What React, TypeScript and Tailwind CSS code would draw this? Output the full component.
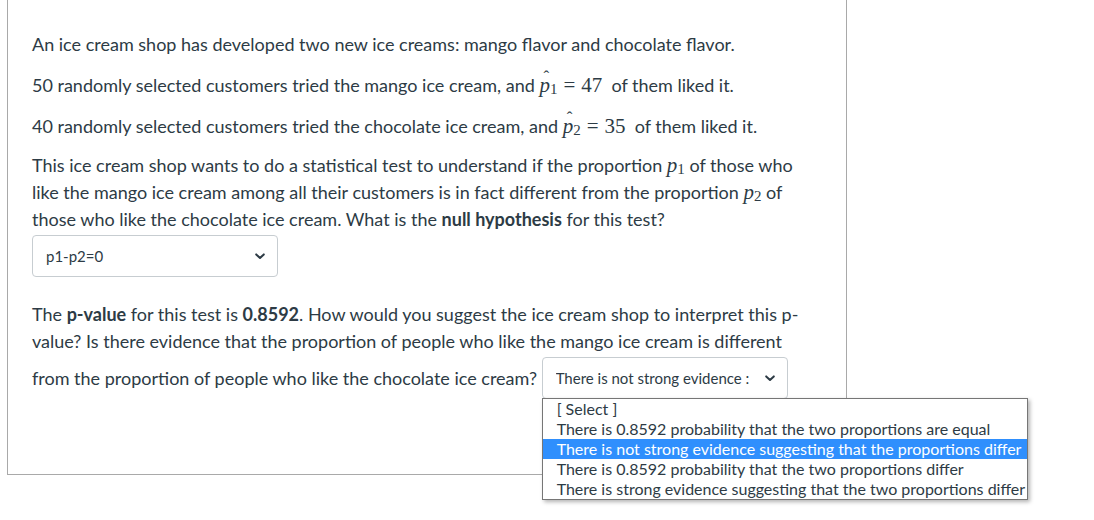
import React from 'react';

const Hat = ({ sub }: { sub: string }) => (
  <span className="font-['Liberation_Serif',serif] text-[21px] whitespace-nowrap">
    <span className="relative italic">
      p
      <span className="absolute left-[4px] top-[-10px] not-italic text-[17px]">ˆ</span>
    </span>
    <sub className="text-[15px] relative bottom-[-2px] align-baseline">{sub}</sub>
  </span>
);

const P = ({ sub }: { sub: string }) => (
  <span className="font-['Liberation_Serif',serif] text-[21px] whitespace-nowrap">
    <span className="italic">p</span>
    <sub className="text-[15px] relative bottom-[-2px] align-baseline">{sub}</sub>
  </span>
);

const Eq = ({ n }: { n: string }) => (
  <span className="font-['Liberation_Serif',serif] text-[21px] whitespace-nowrap">
    <span className="mx-[6px]">=</span>
    {n}
  </span>
);

const Chevron = () => (
  <svg width="10" height="7" viewBox="0 0 10 7" className="shrink-0">
    <path d="M1.2 1.4 L5 5 L8.8 1.4" fill="none" stroke="#2d3b45" strokeWidth="2" strokeLinecap="round" strokeLinejoin="round" />
  </svg>
);

const options = [
  '[ Select ]',
  'There is 0.8592 probability that the two proportions are equal',
  'There is not strong evidence suggesting that the proportions differ',
  'There is 0.8592 probability that the two proportions differ',
  'There is strong evidence suggesting that the two proportions differ',
];

export default function App() {
  return (
    <div className="w-[1094px] h-[520px] bg-white font-['Lato','Noto_Sans',sans-serif] text-[#2d3b45] text-[18px] overflow-hidden">
      <div className="ml-[7px] w-[840px] h-[475px] border-x border-b border-[#a9a9a9] pl-[24px] pr-[40px] pt-[31px] leading-[27px]">
        <p>An ice cream shop has developed two new ice creams: mango flavor and chocolate flavor.</p>
        <p className="mt-[14px]">
          50 randomly selected customers tried the mango ice cream, and <Hat sub="1" />
          <Eq n="47" />
          {'  '}&nbsp;of them liked it.
        </p>
        <p className="mt-[14px]">
          40 randomly selected customers tried the chocolate ice cream, and <Hat sub="2" />
          <Eq n="35" />
          {'  '}&nbsp;of them liked it.
        </p>
        <p className="mt-[12px]">
          This ice cream shop wants to do a statistical test to understand if the proportion <P sub="1" /> of those who like the mango ice cream among all their customers is in fact different from the proportion <P sub="2" /> of those who like the chocolate ice cream. What is the <b className="font-bold">null hypothesis</b> for this test?
        </p>
        <div className="mt-[2px] w-[246px] h-[42px] border border-[#c7cdd1] rounded-[4px] flex items-center justify-between pl-[13px] pr-[12px] text-[15px]">
          <span>p1-p2=0</span>
          <Chevron />
        </div>
        <p className="mt-[24px]">
          The <b className="font-bold">p-value</b> for this test is <b className="font-bold">0.8592</b>. How would you suggest the ice cream shop to interpret this p-value? Is there evidence that the proportion of people who like the mango ice cream is different from the proportion of people who like the chocolate ice cream?{' '}
          <span className="relative inline-block align-middle leading-[20px] mt-[2px] mb-[7px]">
            <span className="w-[246px] h-[42px] border border-[#c7cdd1] rounded-[4px] flex items-center justify-between pl-[13px] pr-[12px] text-[15px] bg-white">
              <span className="whitespace-nowrap overflow-hidden w-[200px]">There is not strong evidence :</span>
              <Chevron />
            </span>
            <span className="absolute left-0 top-[41px] w-[486px] border border-[#767676] bg-white shadow-[2px_2px_4px_rgba(0,0,0,0.3)] z-10 block">
              {options.map((o, i) => (
                <span
                  key={i}
                  className={`block pl-[14px] whitespace-nowrap text-[16px] ${i === 2 ? 'bg-[#2f8ffd] text-white' : 'text-[#2d3b45]'}`}
                >
                  {o}
                </span>
              ))}
            </span>
          </span>
        </p>
      </div>
    </div>
  );
}
